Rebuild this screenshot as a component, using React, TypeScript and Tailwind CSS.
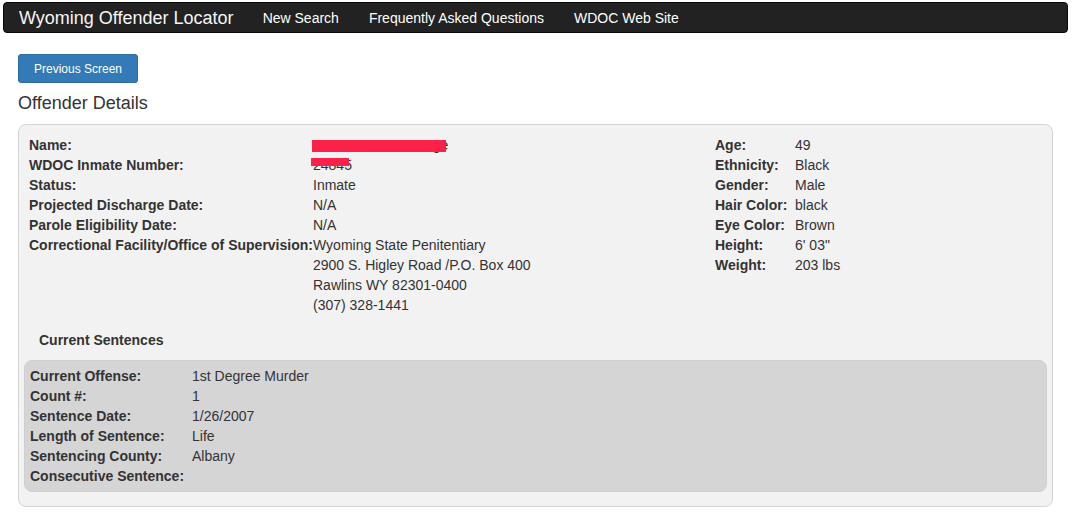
import React from "react"

const leftRows: [string, React.ReactNode][] = [
  ["Name:", "redact-name"],
  ["WDOC Inmate Number:", "redact-num"],
  ["Status:", "Inmate"],
  ["Projected Discharge Date:", "N/A"],
  ["Parole Eligibility Date:", "N/A"],
  [
    "Correctional Facility/Office of Supervision:",
    <>
      Wyoming State Penitentiary
      <br />
      2900 S. Higley Road /P.O. Box 400
      <br />
      Rawlins WY 82301-0400
      <br />
      (307) 328-1441
    </>,
  ],
]

const rightRows = [
  ["Age:", "49"],
  ["Ethnicity:", "Black"],
  ["Gender:", "Male"],
  ["Hair Color:", "black"],
  ["Eye Color:", "Brown"],
  ["Height:", "6' 03\""],
  ["Weight:", "203 lbs"],
]

const sentenceRows = [
  ["Current Offense:", "1st Degree Murder"],
  ["Count #:", "1"],
  ["Sentence Date:", "1/26/2007"],
  ["Length of Sentence:", "Life"],
  ["Sentencing County:", "Albany"],
  ["Consecutive Sentence:", ""],
]

const renderValue = (v: React.ReactNode) => {
  if (v === "redact-name") {
    return (
      <span className="relative inline-block">
        Xxxxxxxx Xxxxxx Xge
        <span className="absolute left-[-1px] top-[5px] h-[12px] w-[134px] bg-[#fb2149]" />
      </span>
    )
  }
  if (v === "redact-num") {
    return (
      <span className="relative inline-block">
        24845
        <span className="absolute left-[-2px] top-[3px] h-[8px] w-[38px] bg-[#fb2149]" />
      </span>
    )
  }
  return v
}

export default function App() {
  return (
    <div className="min-h-[514px] bg-white font-['Liberation_Sans',Arial,sans-serif] text-[14px] leading-[20px] text-[#333]">
      {/* Navbar */}
      <div className="mx-[3px] mr-[4px] pt-[2px]">
        <div className="flex h-[31px] items-center rounded-[4px] border border-[#080808] bg-[#222]">
          <span className="ml-[15px] text-[18px] text-[#f5f5f5]">Wyoming Offender Locator</span>
          <span className="ml-[29px] text-white">New Search</span>
          <span className="ml-[30px] text-white">Frequently Asked Questions</span>
          <span className="ml-[30px] text-white">WDOC Web Site</span>
        </div>
      </div>

      <div className="px-[18px] pr-[19px]">
        <button className="mt-[21px] h-[29px] w-[120px] rounded-[3px] border border-[#2e6da4] bg-[#337ab7] text-[12px] text-white">
          Previous Screen
        </button>
        <h3 className="mt-[9px] text-[18px] leading-[22px] text-[#333]">Offender Details</h3>

        {/* Panel */}
        <div className="mt-[10px] rounded-[8px] border border-[#d4d4d4] bg-[#f2f2f2] px-[5px] pb-[14px] pt-[10px]">
          <div className="flex">
            <table className="ml-[5px] w-[686px] border-collapse self-start">
              <tbody>
                {leftRows.map(([k, v]) => (
                  <tr key={k}>
                    <td className="w-[284px] whitespace-nowrap p-0 align-top font-bold">{k}</td>
                    <td className="p-0 align-top">{renderValue(v)}</td>
                  </tr>
                ))}
              </tbody>
            </table>
            <table className="border-collapse self-start">
              <tbody>
                {rightRows.map(([k, v]) => (
                  <tr key={k}>
                    <td className="w-[80px] whitespace-nowrap p-0 font-bold">{k}</td>
                    <td className="p-0">{v}</td>
                  </tr>
                ))}
              </tbody>
            </table>
          </div>

          <div className="ml-[15px] mt-[15px] font-bold">Current Sentences</div>

          <div className="mt-[10px] rounded-[8px] border border-[#cfcfcf] bg-[#d6d5d6] px-[5px] py-[5px]">
            <table className="border-collapse">
              <tbody>
                {sentenceRows.map(([k, v]) => (
                  <tr key={k}>
                    <td className="w-[162px] whitespace-nowrap p-0 font-bold">{k}</td>
                    <td className="p-0">{v}</td>
                  </tr>
                ))}
              </tbody>
            </table>
          </div>
        </div>
      </div>
    </div>
  )
}
